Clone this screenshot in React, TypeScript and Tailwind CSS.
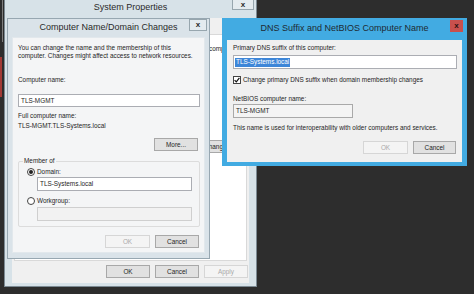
import React from "react";

const Btn = ({
  label,
  disabled,
  w,
}: {
  label: string;
  disabled?: boolean;
  w: string;
}) => (
  <div
    className={`flex items-center justify-center h-[13px] border text-[6.4px] leading-[8px] ${w} ${
      disabled
        ? "bg-[#f4f4f4] border-[#d6d6d6] text-[#a9a9a9]"
        : "bg-[#e1e1e1] border-[#a8a8a8] text-[#1e1e1e]"
    }`}
  >
    {label}
  </div>
);

const Input = ({
  value,
  w,
  disabled,
  h = "h-[14px]",
}: {
  value?: string;
  w: string;
  disabled?: boolean;
  h?: string;
}) => (
  <div
    className={`flex items-center px-[2px] border text-[6.4px] leading-[8px] ${w} ${h} ${
      disabled ? "bg-[#f2f2f2] border-[#cfcfcf]" : "bg-white border-[#abadb3]"
    }`}
  >
    {value}
  </div>
);

const Radio = ({ checked }: { checked?: boolean }) => (
  <div className="w-[8px] h-[8px] rounded-full border border-[#444] bg-white flex items-center justify-center">
    {checked && <div className="w-[4px] h-[4px] rounded-full bg-[#222]" />}
  </div>
);

const App = () => {
  return (
    <div className="relative w-[474px] h-[294px] overflow-hidden bg-[#2d2d2d] font-['Liberation_Sans',Arial,sans-serif] text-[#1e1e1e]">
      {/* desktop edge bits */}
      <div className="absolute left-[2px] top-0 w-[1px] h-[42px] bg-[#7d7d7d]" />
      <div className="absolute left-0 top-[57px] w-[2px] h-[40px] bg-[#a33a36]" />

      {/* System Properties */}
      <div className="absolute left-[4px] top-[-3px] w-[253px] h-[290px] bg-[#d7e2e8] border border-[#7c8a93] flex flex-col">
        <div className="relative h-[20px] flex items-center justify-center text-[9px] text-[#2a2a2a]">
          System Properties
          <div className="absolute left-[227px] top-[1px] w-[22px] h-[11px] bg-[#e4ebef] border border-[#97a6ae] flex items-center justify-center text-[8px] font-bold leading-none">
            x
          </div>
        </div>
        <div className="flex-1 ml-[7px] mr-[7px] mb-[3px] bg-[#f0f0f0] flex flex-col">
          <div className="mt-[16px] mx-[2px] h-[227px] bg-white border border-[#d9d9d9] flex flex-col">
            <div className="pl-[194px] pt-[10px] text-[6.4px] leading-[8px]">computer</div>
            <div className="mt-[87px] flex justify-end pr-[3px]">
              <Btn label="Change..." w="w-[50px]" />
            </div>
          </div>
          <div className="mt-[4px] flex justify-end gap-[5px] pr-[1px]">
            <Btn label="OK" w="w-[44px]" />
            <Btn label="Cancel" w="w-[44px]" />
            <Btn label="Apply" w="w-[44px]" disabled />
          </div>
        </div>
      </div>

      {/* Computer Name/Domain Changes */}
      <div className="absolute left-[7px] top-[18px] w-[203px] h-[241px] bg-[#dae3e9] border border-[#97a7b1] flex flex-col">
        <div className="relative h-[18px] flex items-center justify-center text-[9px] text-[#2a2a2a]">
          Computer Name/Domain Changes
          <div className="absolute left-[181px] top-[0px] w-[18px] h-[12px] bg-[#e4ebef] border border-[#97a6ae] flex items-center justify-center text-[8px] font-bold leading-none">
            x
          </div>
        </div>
        <div className="flex-1 mx-[4px] mb-[5px] bg-[#f4f5f6] border border-[#e2e8ec] flex flex-col px-[5px] pt-[6px] text-[6.4px] leading-[8px]">
          <p>
            You can change the name and the membership of this
            <br />
            computer. Changes might affect access to network resources.
          </p>
          <div className="mt-[16px]">Computer name:</div>
          <div className="mt-[10px]">
            <Input value="TLS-MGMT" w="w-[182px]" h="h-[13px]" />
          </div>
          <div className="mt-[5px]">Full computer name:</div>
          <div className="mt-[2px]">TLS-MGMT.TLS-Systems.local</div>
          <div className="mt-[8px] flex justify-end pr-[1px]">
            <Btn label="More..." w="w-[44px]" />
          </div>
          <fieldset className="mt-[6px] border border-[#dcdcdc] rounded-[2px] pl-[8px] pb-[5px] w-[182px]">
            <legend className="ml-[-4px] px-[1px]">Member of</legend>
            <div className="mt-[3px] flex items-center gap-[2px]">
              <Radio checked />
              <span>Domain:</span>
            </div>
            <div className="mt-[1px] ml-[10px]">
              <Input value="TLS-Systems.local" w="w-[155px]" />
            </div>
            <div className="mt-[6px] flex items-center gap-[2px]">
              <Radio />
              <span>Workgroup:</span>
            </div>
            <div className="mt-[2px] ml-[10px]">
              <Input w="w-[155px]" disabled />
            </div>
          </fieldset>
          <div className="mt-[8px] flex justify-end gap-[5px]">
            <Btn label="OK" w="w-[45px]" disabled />
            <Btn label="Cancel" w="w-[44px]" />
          </div>
        </div>
      </div>

      {/* DNS Suffix and NetBIOS Computer Name */}
      <div className="absolute left-[222px] top-[18px] w-[245px] h-[148px] bg-[#42abe2] flex flex-col">
        <div className="relative h-[22px] flex items-center justify-center text-[9px] text-[#1e2a33]">
          DNS Suffix and NetBIOS Computer Name
          <div className="absolute left-[228px] top-[2px] w-[13px] h-[12px] bg-[#c9504d] flex items-center justify-center text-[8px] font-bold leading-none text-[#2b1010]">
            x
          </div>
        </div>
        <div className="flex-1 mx-[5px] mb-[4px] bg-[#f0f0f0] flex flex-col pl-[6px] pr-[5px] pt-[4px] text-[6.4px] leading-[8px]">
          <div>Primary DNS suffix of this computer:</div>
          <div className="mt-[3px] h-[14px] w-[224px] bg-white border border-[#abadb3] flex items-center pl-[1px]">
            <span className="bg-[#3d86d8] text-white h-[9px] flex items-center px-[1px]">TLS-Systems.local</span>
          </div>
          <div className="mt-[7px] flex items-center gap-[2px]">
            <div className="w-[8px] h-[8px] border border-[#444] bg-white flex items-center justify-center">
              <svg width="6" height="6" viewBox="0 0 6 6">
                <path d="M0.6 3.2 L2.3 4.9 L5.4 0.9" fill="none" stroke="#111" strokeWidth="1.2" />
              </svg>
            </div>
            <span>Change primary DNS suffix when domain membership changes</span>
          </div>
          <div className="mt-[11px]">NetBIOS computer name:</div>
          <div className="mt-[1px] h-[14px] w-[120px] bg-[#f4f4f4] border border-[#a9a9a9] flex items-center px-[2px]">
            TLS-MGMT
          </div>
          <div className="mt-[6px]">This name is used for interoperability with older computers and services.</div>
          <div className="mt-[9px] flex justify-end gap-[5px] pr-[1px]">
            <Btn label="OK" w="w-[45px]" disabled />
            <Btn label="Cancel" w="w-[43px]" />
          </div>
        </div>
      </div>
    </div>
  );
};

export default App;
